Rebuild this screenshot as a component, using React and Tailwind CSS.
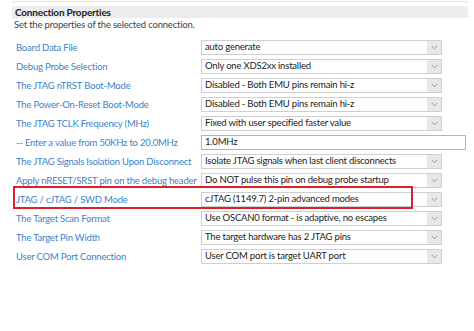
const rows = [
  { label: "Board Data File", value: "auto generate" },
  { label: "Debug Probe Selection", value: "Only one XDS2xx installed" },
  { label: "The JTAG nTRST Boot-Mode", value: "Disabled - Both EMU pins remain hi-z" },
  { label: "The Power-On-Reset Boot-Mode", value: "Disabled - Both EMU pins remain hi-z" },
  { label: "The JTAG TCLK Frequency (MHz)", value: "Fixed with user specified faster value" },
  { label: "-- Enter a value from 50KHz to 20.0MHz", value: "1.0MHz", input: true },
  { label: "The JTAG Signals Isolation Upon Disconnect", value: "Isolate JTAG signals when last client disconnects" },
  { label: "Apply nRESET/SRST pin on the debug header", value: "Do NOT pulse this pin on debug probe startup" },
  { label: "JTAG / cJTAG / SWD Mode", value: "cJTAG (1149.7) 2-pin advanced modes" },
  { label: "The Target Scan Format", value: "Use OSCAN0 format - is adaptive, no escapes" },
  { label: "The Target Pin Width", value: "The target hardware has 2 JTAG pins" },
  { label: "User COM Port Connection", value: "User COM port is target UART port" },
];

const Chevron = () => (
  <svg width="7" height="5" viewBox="0 0 7 5" fill="none">
    <path d="M0.8 1 L3.5 3.8 L6.2 1" stroke="#9a9a9a" strokeWidth="1" />
  </svg>
);

const App = () => {
  return (
    <div
      className="w-[474px] h-[331px] overflow-hidden bg-white text-[#333] tracking-[-0.2px]"
      style={{ fontFamily: "Lato, sans-serif" }}
    >
      <div className="pt-[1px]">
        <div className="ml-3 mr-[6px] h-px bg-[#e2e2e2]" />
        <div className="ml-3 mr-[6px] mt-[4px] h-[12px] bg-[#ececec] pl-[3px] text-[10px] font-bold leading-[12px] text-[#222]">
          Connection Properties
        </div>
        <div className="ml-[14px] h-[14px] text-[9.5px] leading-[14px] text-[#444]">
          Set the properties of the selected connection.
        </div>
      </div>

      <div className="relative mt-[6px] ml-3">
        {rows.map((row) => (
          <div key={row.label} className="flex h-[19px] items-center">
            <div className="w-[189px] shrink-0 whitespace-nowrap pl-[4px] text-[9.5px] leading-[14px] text-[#3a82cb]">
              {row.label}
            </div>
            {row.input ? (
              <div className="flex h-[15px] w-[265px] items-center border border-[#b4b4b4] bg-white pl-[3px] text-[9.5px] text-[#222]">
                1.0MHz
              </div>
            ) : (
              <div className="flex h-[15px] w-[241px] items-center border border-[#cfcfcf] bg-white">
                <span className="flex-1 whitespace-nowrap pl-[3px] text-[9.5px] text-[#222]">{row.value}</span>
                <span className="flex h-full w-[14px] items-center justify-center bg-[#e8e8e8]">
                  <Chevron />
                </span>
              </div>
            )}
          </div>
        ))}
        <div className="absolute left-[1px] top-[148px] h-[23px] w-[400px] border-2 border-[#dc1f2b]" />
      </div>
    </div>
  );
};

export default App;
